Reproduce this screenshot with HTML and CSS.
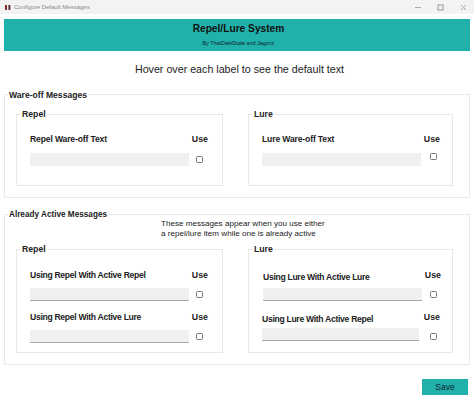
FILE: index.html
```html
<!DOCTYPE html>
<html lang="en">
<head>
<meta charset="utf-8">
<title>Configure Default Messages</title>
<link rel="stylesheet" href="styles.css">
</head>
<body>
<header class="titlebar">
  <svg class="app-icon" width="6" height="6" viewBox="0 0 6 6"><path d="M0 1h2v5H0z" fill="#8a2a2a"/><path d="M3.4 1h2v5h-2z" fill="#5a3030"/></svg>
  <span class="title">Configure Default Messages</span>
  <span class="win-controls">
    <svg width="7" height="7" viewBox="0 0 7 7"><path d="M0 3.5h6" stroke="#aaa" fill="none"/></svg>
    <svg width="7" height="7" viewBox="0 0 7 7"><rect x="1" y="1" width="5" height="5" stroke="#999" fill="none"/></svg>
    <svg width="7" height="7" viewBox="0 0 7 7"><path d="M1 1l5 5M6 1L1 6" stroke="#aaa" fill="none"/></svg>
  </span>
</header>
<div class="banner">
  <h1>Repel/Lure System</h1>
  <p>By ThatDaleDude and Jagonz</p>
</div>
<p class="hint">Hover over each label to see the default text</p>

<fieldset class="group group-wareoff">
  <legend>Ware-off Messages</legend>
  <div class="columns">
    <fieldset class="panel panel-short">
      <legend>Repel</legend>
      <div class="row row-wareoff">
        <span class="label label-wide">Repel Ware-off Text</span><span class="use">Use</span>
        <input class="text flat" type="text"><input class="check" type="checkbox">
      </div>
    </fieldset>
    <fieldset class="panel panel-right panel-short">
      <legend>Lure</legend>
      <div class="row row-wareoff row-lure-b">
        <span class="label label-wide">Lure Ware-off Text</span><span class="use">Use</span>
        <input class="text flat" type="text"><input class="check check-high" type="checkbox">
      </div>
    </fieldset>
  </div>
</fieldset>

<fieldset class="group group-active">
  <legend>Already Active Messages</legend>
  <p class="note">These messages appear when you use either<br>a repel/lure item while one is already active</p>
  <div class="columns">
    <fieldset class="panel">
      <legend>Repel</legend>
      <div class="row row-active">
        <span class="label">Using Repel With Active Repel</span><span class="use">Use</span>
        <input class="text" type="text"><input class="check" type="checkbox">
      </div>
      <div class="row row-active">
        <span class="label">Using Repel With Active Lure</span><span class="use">Use</span>
        <input class="text" type="text"><input class="check" type="checkbox">
      </div>
    </fieldset>
    <fieldset class="panel panel-right">
      <legend>Lure</legend>
      <div class="row row-active row-lure-a">
        <span class="label label-low">Using Lure With Active Lure</span><span class="use">Use</span>
        <input class="text" type="text"><input class="check" type="checkbox">
      </div>
      <div class="row row-active row-lure-b">
        <span class="label label-low">Using Lure With Active Repel</span><span class="use">Use</span>
        <input class="text text-high" type="text"><input class="check" type="checkbox">
      </div>
    </fieldset>
  </div>
</fieldset>

<div class="actions"><button class="save" type="button">Save</button></div>
</body>
</html>
```
FILE: styles.css
```css
* { box-sizing: border-box; }
html, body { margin: 0; padding: 0; }
body {
  width: 474px;
  height: 401px;
  overflow: hidden;
  background: #fff;
  color: #111;
  font-family: "Liberation Sans", Arial, sans-serif;
  display: flex;
  flex-direction: column;
}
.titlebar {
  height: 14px;
  flex: none;
  background: #f3f3f3;
  display: flex;
  align-items: center;
  padding: 0 0 0 5px;
}
.app-icon { margin-right: 3px; }
.title { font-size: 6px; color: #8a8a8a; }
.win-controls { margin-left: auto; display: flex; gap: 15.5px; padding-right: 7.5px; }
.banner {
  flex: none;
  margin: 5px 0 0 4px;
  width: 466px;
  height: 32px;
  background: #20b2aa;
  text-align: center;
  padding: 3px 0 0 3px;
}
.banner h1 { margin: 0; font-size: 10.2px; line-height: 14px; font-weight: 700; }
.banner p { margin: 3px 0 0; font-size: 5.4px; line-height: 8px; color: #123; }
.hint {
  flex: none;
  margin: 11px 0 0;
  padding-left: 5px;
  height: 14px;
  font-size: 10.7px;
  line-height: 14px;
  text-align: center;
  color: #222;
}
.group {
  flex: none;
  margin: 0 0 0 4px;
  width: 466px;
  padding: 0;
  border: 1px solid #e8e8e8;
  min-width: 0;
}
.group > legend {
  margin-left: 3px;
  padding: 2px 1px 0;
  font-size: 8.6px;
  line-height: 10px;
  font-weight: 700;
  color: #222;
}
.group-wareoff { margin-top: 12px; height: 110px; }
.group-active { margin-top: 10px; height: 157px; }
.group-active > legend { font-size: 8.2px; }
.columns { display: flex; gap: 25px; padding-left: 11px; margin-top: 9px; }
.group-active .columns { margin-top: 6px; }
.panel {
  margin: 0;
  padding: 0;
  width: 207px;
  height: 109px;
  border: 1px solid #e8e8e8;
  min-width: 0;
}
.panel-short { height: 77px; }
.panel-right { width: 205px; }
.panel > legend {
  margin-left: 4px;
  padding: 0 1px;
  font-size: 8.7px;
  line-height: 10px;
  font-weight: 700;
  color: #222;
}
.row {
  display: grid;
  grid-template-columns: 160px 18px;
  grid-template-rows: 10px 13px;
  align-items: center;
  padding-left: 13px;
}
.row-wareoff { row-gap: 9px; margin-top: 15px; }
.row-active { row-gap: 8px; margin-top: 11px; }
.row-active:first-of-type { margin-top: 16px; }
.label { font-size: 8.6px; letter-spacing: -0.3px; line-height: 10px; font-weight: 700; color: #222; white-space: nowrap; }
.label-wide { font-size: 8.6px; letter-spacing: -0.15px; }
.label-low { transform: translateY(2px); }
.use { font-size: 8.8px; line-height: 10px; font-weight: 700; color: #222; justify-self: end; white-space: nowrap; }
.text {
  width: 159px;
  height: 13px;
  border: 0;
  border-bottom: 1px solid #aaa;
  background: #f0f0f0;
  padding: 0;
  margin: 0;
}
.text.flat { border-bottom-color: #f0f0f0; }
.text-high { width: 157px; transform: translateY(-2px); }
.check {
  appearance: none;
  width: 7px;
  height: 7px;
  margin: 0 0 0 6px;
  border: 1px solid #777;
  border-radius: 1.5px;
  background: #fff;
  justify-self: start;
}
.check-high { transform: translateY(-3px); }
.row-lure-a { padding-left: 14px; }
.row-lure-a .check { margin-left: 7px; }
.row-lure-b .check { margin-left: 8px; }
.actions { flex: 1; display: flex; justify-content: flex-end; align-items: flex-start; padding: 14px 6px 0 0; }
.save {
  width: 46px;
  height: 16px;
  border: 0;
  padding: 0;
  background: #20b2aa;
  font-family: inherit;
  font-size: 8.5px;
  color: #123;
}
.note {
  margin: -1px 0 0 156px;
  font-size: 8.1px;
  line-height: 9.5px;
  color: #222;
}
```
